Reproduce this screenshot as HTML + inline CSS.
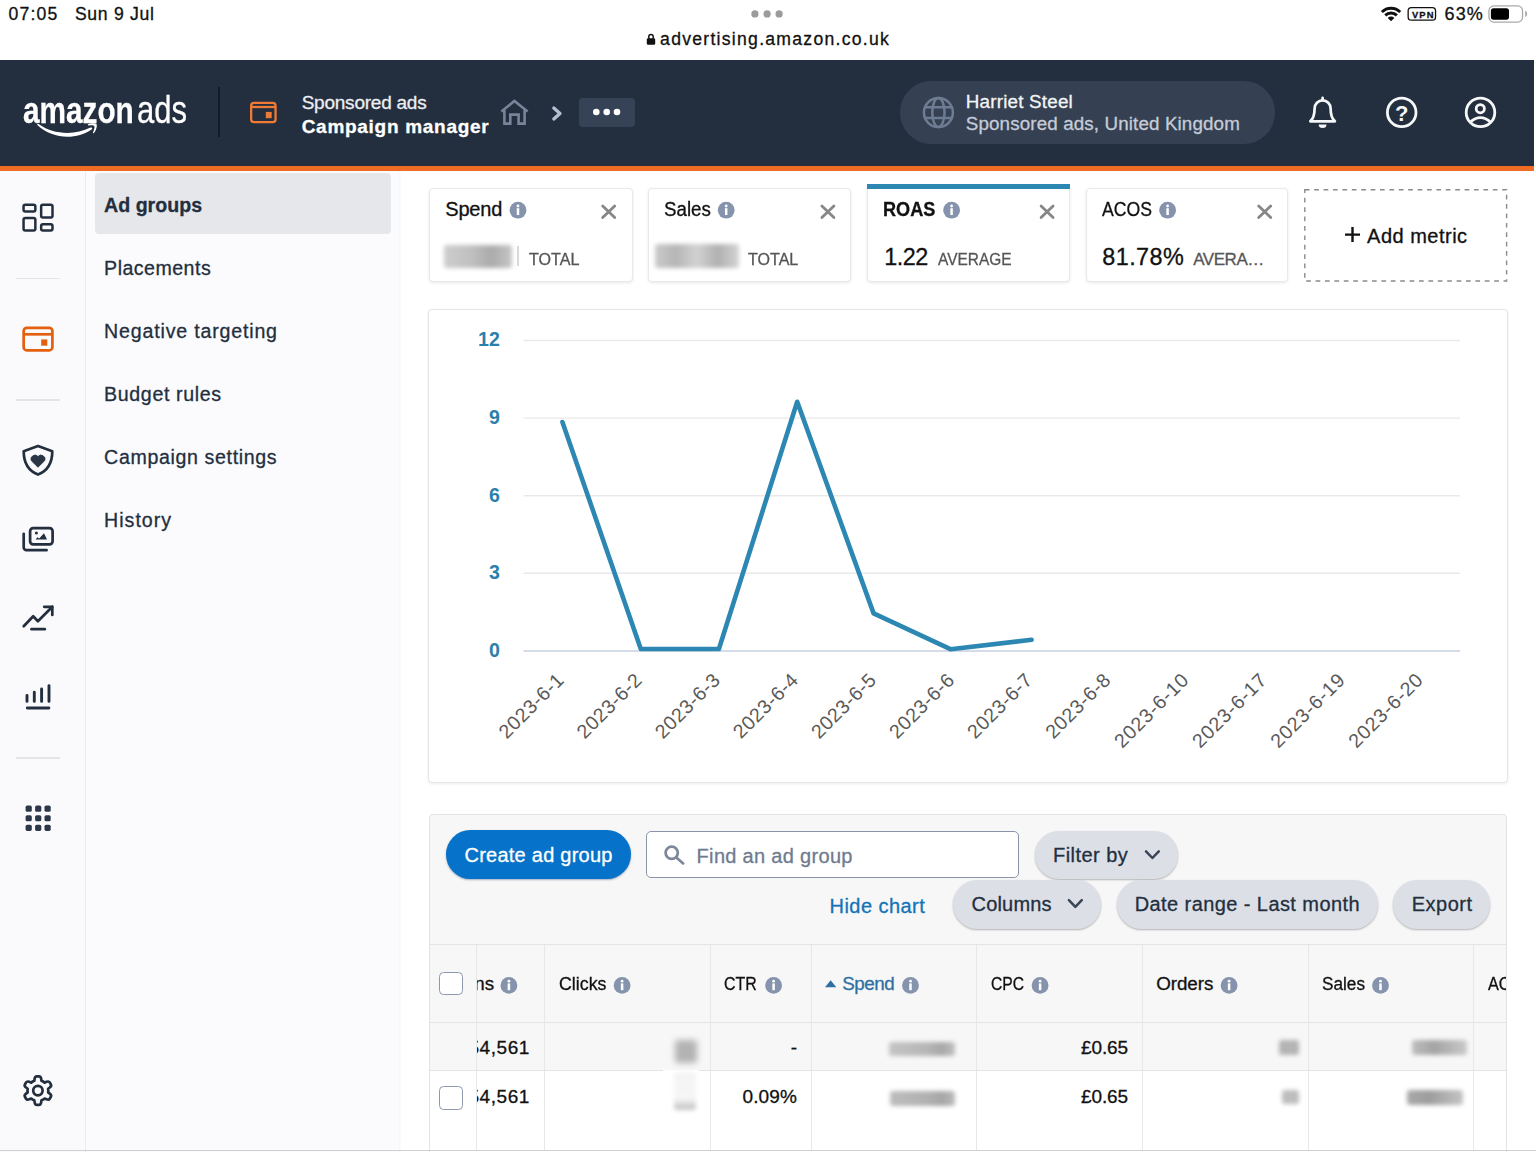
<!DOCTYPE html>
<html lang="en"><head><meta charset="utf-8"><title>Campaign manager - Amazon Ads</title>
<style>
*{box-sizing:border-box;margin:0;padding:0}
html,body{width:1536px;height:1152px;overflow:hidden;background:#fff}
body{position:relative;font-family:"Liberation Sans", Arial, sans-serif;color:#111}
.t{position:absolute;white-space:nowrap;line-height:1;transform-origin:0 0;-webkit-text-stroke:.3px currentColor}
.t.r{transform-origin:100% 0}
div{position:absolute}
svg{position:absolute;left:0;top:0}
svg text{font-family:"Liberation Sans", Arial, sans-serif}
#status{left:0;top:0;width:1536px;height:59.5px;background:#fff}
#header{left:0;top:59.5px;width:1534px;height:106.5px;background:#232f3e}
#orange{left:0;top:165.5px;width:1534px;height:5.6px;background:#f06b23}
#hdiv{left:217.7px;top:86.7px;width:2px;height:50px;background:#141b25}
#dots{left:578.7px;top:98.3px;width:56.3px;height:28.7px;border-radius:4px;background:#364256}
#acct{left:900px;top:81.3px;width:375.4px;height:62.4px;border-radius:31.2px;background:#354052}
#rail{left:0;top:171px;width:85.5px;height:981px;background:#fafafc;border-right:1.5px solid #ebecef}
#nav{left:85.5px;top:171px;width:313.8px;height:981px;background:#fbfbfd;box-shadow:1px 0 2.5px rgba(0,0,0,.05)}
.sep{left:16px;width:44px;height:1.6px;background:#e4e5e9}
#navsel{left:95.4px;top:172.9px;width:295.8px;height:60.7px;border-radius:4px;background:#e6e7ea}
.card{top:188.3px;height:93.7px;background:#fff;border:1px solid #e9e9e9;border-radius:4px;box-shadow:0 1px 3px rgba(0,0,0,.09)}
.card.act{border-radius:0 0 4px 4px}
#actbar{left:866.6px;top:184px;width:203.6px;height:5px;background:#2d87b3}
#addm{left:1304.1px;top:189px;width:203.2px;height:92.6px}
#chart{left:428.2px;top:308.8px;width:1079.5px;height:474px;background:#fff;border:1px solid #e6e6e6;border-radius:4px;box-shadow:0 1px 3px rgba(0,0,0,.08)}
#tpanel{left:429.4px;top:813.7px;width:1077.6px;height:340px;background:#f7f7f7;border:1px solid #e3e3e3;border-radius:4px 4px 0 0}
#thead{left:430.4px;top:943.9px;width:1075.6px;height:79.6px;background:#f7f7f7;border-top:1.4px solid #e4e4e4;border-bottom:1.4px solid #e4e4e4}
#row1{left:430.4px;top:1023.5px;width:1075.6px;height:47.3px;background:#f7f7f7;border-bottom:1.4px solid #e4e4e4}
#row2{left:430.4px;top:1070.8px;width:1075.6px;height:81.2px;background:#fff}
.vsep{top:944.6px;width:1px;height:206px;background:#e7e7e7}
#createbtn{left:446px;top:830.3px;width:184.5px;height:48.8px;border-radius:24.4px;background:#0672c9;box-shadow:0 1px 2px rgba(0,40,90,.35)}
#search{left:646.2px;top:830.6px;width:373.3px;height:47.9px;border-radius:5px;background:#fff;border:1.8px solid #8a94a7}
.pill{border-radius:24.5px;background:#dcdfe6;box-shadow:0 1px 2px rgba(0,0,0,.28)}
.clip{overflow:hidden}
.cb{width:23.8px;height:23.8px;border-radius:4.5px;background:#fff;border:1.8px solid #8d98ad}
.blur{filter:blur(2.2px);border-radius:3px}
#botline{left:0;top:1149.7px;width:1536px;height:1.2px;background:#cfcfcf}
</style></head>
<body>
<div id="status">
<span class="t" id="t0" style="top:6.00px;font-size:17.60px;left:8.50px;letter-spacing:1.192px;">07:05</span>
<span class="t" id="t1" style="top:6.00px;font-size:17.60px;left:74.90px;letter-spacing:0.705px;">Sun 9 Jul</span>
<span class="t" id="t2" style="top:31.00px;font-size:17.60px;left:660.10px;letter-spacing:1.269px;">advertising.amazon.co.uk</span>
<span class="t" id="t3" style="top:5.00px;font-size:18.00px;left:1444.60px;letter-spacing:1.084px;">63%</span>
<span class="t" id="t4" style="top:10.00px;font-size:9.40px;font-weight:700;left:1411.90px;letter-spacing:1.159px;">VPN</span>
</div>
<div id="header"></div><div id="orange"></div>
<div id="hdiv"></div>
<span class="t" id="t5" style="top:92.00px;font-size:37.00px;font-weight:700;color:#fff;left:22.50px;transform:scaleX(0.8043);">amazon</span>
<span class="t" id="t6" style="top:91.00px;font-size:38.50px;color:#fff;left:136.70px;transform:scaleX(0.8054);">ads</span>
<span class="t" id="t7" style="top:93.00px;font-size:19.00px;color:#eceef2;left:301.70px;letter-spacing:-0.236px;">Sponsored ads</span>
<span class="t" id="t8" style="top:117.00px;font-size:19.00px;font-weight:700;color:#fff;left:301.70px;letter-spacing:0.711px;">Campaign manager</span>
<div id="dots"></div>
<div id="acct"></div>
<span class="t" id="t9" style="top:93.00px;font-size:18.80px;color:#f3f4f6;left:965.80px;letter-spacing:0.217px;">Harriet Steel</span>
<span class="t" id="t10" style="top:115.00px;font-size:18.80px;color:#c5ccd8;left:965.80px;letter-spacing:0.128px;">Sponsored ads, United Kingdom</span>
<div id="rail"></div><div id="nav"></div>
<div class="sep" style="top:277.5px"></div><div class="sep" style="top:399px"></div><div class="sep" style="top:757px"></div>
<div id="navsel"></div>
<span class="t" id="t11" style="top:196.00px;font-size:19.60px;font-weight:700;color:#232f3e;left:104.10px;">Ad groups</span>
<span class="t" id="t12" style="top:259.00px;font-size:19.60px;color:#232f3e;left:104.10px;letter-spacing:0.469px;">Placements</span>
<span class="t" id="t13" style="top:322.00px;font-size:19.60px;color:#232f3e;left:104.10px;letter-spacing:0.816px;">Negative targeting</span>
<span class="t" id="t14" style="top:385.00px;font-size:19.60px;color:#232f3e;left:104.10px;letter-spacing:0.635px;">Budget rules</span>
<span class="t" id="t15" style="top:448.00px;font-size:19.60px;color:#232f3e;left:104.10px;letter-spacing:0.639px;">Campaign settings</span>
<span class="t" id="t16" style="top:511.00px;font-size:19.60px;color:#232f3e;left:104.10px;letter-spacing:1.005px;">History</span>
<div class="card" style="left:428.6px;width:204.2px"></div>
<div class="card" style="left:647.8px;width:203.5px"></div>
<div class="card act" style="left:866.6px;width:203.6px"></div>
<div class="card" style="left:1085.7px;width:202.8px"></div>
<div id="actbar"></div>
<div id="addm"></div>
<span class="t" id="t17" style="top:199.00px;font-size:20.00px;left:445.30px;letter-spacing:-0.211px;">Spend</span>
<span class="t" id="t18" style="top:251.00px;font-size:17.00px;color:#555;left:528.60px;transform:scaleX(0.9470);">TOTAL</span>
<span class="t" id="t19" style="top:199.00px;font-size:20.00px;left:664.20px;transform:scaleX(0.9374);">Sales</span>
<span class="t" id="t20" style="top:251.00px;font-size:17.00px;color:#555;left:747.80px;transform:scaleX(0.9452);">TOTAL</span>
<span class="t" id="t21" style="top:199.00px;font-size:20.00px;font-weight:700;left:883.10px;transform:scaleX(0.9066);">ROAS</span>
<span class="t" id="t22" style="top:246.00px;font-size:23.40px;left:884.20px;letter-spacing:-0.477px;">1.22</span>
<span class="t" id="t23" style="top:251.00px;font-size:17.00px;color:#555;left:937.70px;transform:scaleX(0.9081);">AVERAGE</span>
<span class="t" id="t24" style="top:199.00px;font-size:20.00px;left:1101.80px;transform:scaleX(0.8820);">ACOS</span>
<span class="t" id="t25" style="top:246.00px;font-size:23.40px;left:1102.30px;letter-spacing:0.431px;">81.78%</span>
<span class="t" id="t26" style="top:251.00px;font-size:17.00px;color:#555;left:1193.20px;letter-spacing:-0.455px;">AVERA…</span>
<span class="t" id="t27" style="top:226.00px;font-size:20.00px;left:1367.10px;letter-spacing:0.490px;">Add metric</span>
<div class="blur" style="left:444px;top:245px;width:68px;height:23px;background:linear-gradient(90deg,#cdcdcd,#c0c0c0 40%,#ababab 70%,#c6c6c6)"></div>
<div style="position:absolute;left:517px;top:246px;width:2px;height:20px;background:#d9d9d9;filter:blur(.6px)"></div>
<div class="blur" style="left:655px;top:244px;width:84px;height:24px;background:linear-gradient(90deg,#cacaca,#b6b6b6 25%,#d2d2d2 50%,#b0b0b0 75%,#d4d4d4)"></div>
<div id="chart"></div>
<svg id="chartsvg" width="1536" height="1152" viewBox="0 0 1536 1152">
<line x1="523.5" x2="1460" y1="340.5" y2="340.5" stroke="#e9e9e9" stroke-width="1.4"/>
<line x1="523.5" x2="1460" y1="418.1" y2="418.1" stroke="#e9e9e9" stroke-width="1.4"/>
<line x1="523.5" x2="1460" y1="495.7" y2="495.7" stroke="#e9e9e9" stroke-width="1.4"/>
<line x1="523.5" x2="1460" y1="573.3" y2="573.3" stroke="#e9e9e9" stroke-width="1.4"/>
<line x1="523.5" x2="1460" y1="651" y2="651" stroke="#c7d1e2" stroke-width="1.6"/>
<polyline fill="none" stroke="#2d87b3" stroke-width="4.6" stroke-linejoin="round" stroke-linecap="round" points="562.4,422.0 640.8,649.0 718.9,649.0 797.2,401.8 873.6,613.4 950.4,649.2 1031.6,639.8"/>
<text x="499.8" y="346.3" text-anchor="end" font-weight="700" font-size="19.6" fill="#2d7fab">12</text>
<text x="499.8" y="423.9" text-anchor="end" font-weight="700" font-size="19.6" fill="#2d7fab">9</text>
<text x="499.8" y="501.5" text-anchor="end" font-weight="700" font-size="19.6" fill="#2d7fab">6</text>
<text x="499.8" y="579.1" text-anchor="end" font-weight="700" font-size="19.6" fill="#2d7fab">3</text>
<text x="499.8" y="656.7" text-anchor="end" font-weight="700" font-size="19.6" fill="#2d7fab">0</text>
<text x="564.9" y="681.5" text-anchor="end" font-size="19.6" fill="#5a5a5a" textLength="82.2" lengthAdjust="spacing" transform="rotate(-45 564.9 681.5)">2023-6-1</text>
<text x="643.0" y="681.5" text-anchor="end" font-size="19.6" fill="#5a5a5a" textLength="82.2" lengthAdjust="spacing" transform="rotate(-45 643.0 681.5)">2023-6-2</text>
<text x="721.1" y="681.5" text-anchor="end" font-size="19.6" fill="#5a5a5a" textLength="82.2" lengthAdjust="spacing" transform="rotate(-45 721.1 681.5)">2023-6-3</text>
<text x="799.2" y="681.5" text-anchor="end" font-size="19.6" fill="#5a5a5a" textLength="82.2" lengthAdjust="spacing" transform="rotate(-45 799.2 681.5)">2023-6-4</text>
<text x="877.3" y="681.5" text-anchor="end" font-size="19.6" fill="#5a5a5a" textLength="82.2" lengthAdjust="spacing" transform="rotate(-45 877.3 681.5)">2023-6-5</text>
<text x="955.4" y="681.5" text-anchor="end" font-size="19.6" fill="#5a5a5a" textLength="82.2" lengthAdjust="spacing" transform="rotate(-45 955.4 681.5)">2023-6-6</text>
<text x="1033.5" y="681.5" text-anchor="end" font-size="19.6" fill="#5a5a5a" textLength="82.2" lengthAdjust="spacing" transform="rotate(-45 1033.5 681.5)">2023-6-7</text>
<text x="1111.6" y="681.5" text-anchor="end" font-size="19.6" fill="#5a5a5a" textLength="82.2" lengthAdjust="spacing" transform="rotate(-45 1111.6 681.5)">2023-6-8</text>
<text x="1189.7" y="681.5" text-anchor="end" font-size="19.6" fill="#5a5a5a" textLength="95.4" lengthAdjust="spacing" transform="rotate(-45 1189.7 681.5)">2023-6-10</text>
<text x="1267.8" y="681.5" text-anchor="end" font-size="19.6" fill="#5a5a5a" textLength="95.4" lengthAdjust="spacing" transform="rotate(-45 1267.8 681.5)">2023-6-17</text>
<text x="1345.9" y="681.5" text-anchor="end" font-size="19.6" fill="#5a5a5a" textLength="95.4" lengthAdjust="spacing" transform="rotate(-45 1345.9 681.5)">2023-6-19</text>
<text x="1424.0" y="681.5" text-anchor="end" font-size="19.6" fill="#5a5a5a" textLength="95.4" lengthAdjust="spacing" transform="rotate(-45 1424.0 681.5)">2023-6-20</text>
</svg>
<div id="tpanel"></div>
<div id="thead"></div><div id="row1"></div><div id="row2"></div>
<div class="vsep" style="left:476px"></div>
<div class="vsep" style="left:544px"></div>
<div class="vsep" style="left:710px"></div>
<div class="vsep" style="left:811px"></div>
<div class="vsep" style="left:976px"></div>
<div class="vsep" style="left:1142px"></div>
<div class="vsep" style="left:1308px"></div>
<div class="vsep" style="left:1473px"></div>
<div id="createbtn"></div>
<span class="t" id="t28" style="top:845.00px;font-size:20.00px;color:#fff;left:464.50px;letter-spacing:0.240px;">Create ad group</span>
<div id="search"></div>
<span class="t" id="t29" style="top:846.00px;font-size:20.00px;color:#6f7b8f;left:696.60px;letter-spacing:0.311px;">Find an ad group</span>
<span class="t" id="t30" style="top:896.00px;font-size:20.00px;color:#1473b7;left:829.50px;letter-spacing:0.460px;">Hide chart</span>
<div class="pill" style="left:1034.9px;top:830.6px;width:142.8px;height:48.4px"></div>
<div class="pill" style="left:953.4px;top:879.8px;width:148.1px;height:48.9px"></div>
<div class="pill" style="left:1116.5px;top:879.8px;width:261.7px;height:48.9px"></div>
<div class="pill" style="left:1393.2px;top:879.8px;width:96.7px;height:48.9px"></div>
<span class="t" id="t31" style="top:845.00px;font-size:20.00px;color:#232f3e;left:1053.00px;letter-spacing:0.447px;">Filter by</span>
<span class="t" id="t32" style="top:894.00px;font-size:20.00px;color:#232f3e;left:971.60px;letter-spacing:0.163px;">Columns</span>
<span class="t" id="t33" style="top:894.00px;font-size:20.00px;color:#232f3e;left:1134.70px;letter-spacing:0.419px;">Date range - Last month</span>
<span class="t" id="t34" style="top:894.00px;font-size:20.00px;color:#232f3e;left:1411.80px;letter-spacing:0.478px;">Export</span>
<div class="clip" style="left:476.6px;top:960px;width:60px;height:50px"><span class="t r" id="t35" style="top:15.00px;font-size:18.80px;left:17.60px;transform:translateX(-100%);">Impressions</span></div>
<span class="t" id="t36" style="top:975.00px;font-size:18.80px;left:559.00px;transform:scaleX(0.9482);">Clicks</span>
<span class="t" id="t37" style="top:975.00px;font-size:18.80px;left:724.40px;transform:scaleX(0.8495);">CTR</span>
<span class="t" id="t38" style="top:975.00px;font-size:18.80px;color:#2f6fa3;left:842.20px;letter-spacing:-0.453px;">Spend</span>
<span class="t" id="t39" style="top:975.00px;font-size:18.80px;left:990.90px;transform:scaleX(0.8347);">CPC</span>
<span class="t" id="t40" style="top:975.00px;font-size:18.80px;left:1156.30px;letter-spacing:-0.081px;">Orders</span>
<span class="t" id="t41" style="top:975.00px;font-size:18.80px;left:1321.90px;transform:scaleX(0.9152);">Sales</span>
<div class="clip" style="left:1480px;top:960px;width:26.3px;height:50px"><span class="t" id="t42" style="top:15.00px;font-size:18.80px;left:7.60px;transform:scaleX(0.8641);">ACOS</span></div>
<div class="clip" style="left:476.6px;top:1024px;width:60px;height:40px"><span class="t r" id="t43" style="top:14.00px;font-size:19.00px;left:52.80px;letter-spacing:0.575px;margin-left:0.575px;transform:translateX(-100%);">54,561</span></div>
<span class="t r" id="t44" style="top:1038.00px;font-size:19.00px;left:1128.00px;letter-spacing:-0.162px;margin-left:-0.162px;transform:translateX(-100%);">£0.65</span>
<div class="clip" style="left:476.6px;top:1073px;width:60px;height:40px"><span class="t r" id="t45" style="top:14.00px;font-size:19.00px;left:52.80px;letter-spacing:0.575px;margin-left:0.575px;transform:translateX(-100%);">54,561</span></div>
<span class="t r" id="t46" style="top:1087.00px;font-size:19.00px;left:1128.00px;letter-spacing:-0.162px;margin-left:-0.162px;transform:translateX(-100%);">£0.65</span>
<span class="t r" id="t47" style="top:1038.00px;font-size:19.00px;left:797.00px;transform:translateX(-100%);">-</span>
<span class="t r" id="t48" style="top:1087.00px;font-size:19.00px;left:797.00px;letter-spacing:0.181px;margin-left:0.181px;transform:translateX(-100%);">0.09%</span>
<div class="cb" style="left:438.9px;top:971.7px"></div><div class="cb" style="left:438.9px;top:1086.2px"></div>
<div class="blur" style="left:675px;top:1040px;width:22px;height:23px;background:#b3b3b3;filter:blur(3px)"></div>
<div style="position:absolute;left:663px;top:1069.8px;width:36.3px;height:41px;background:#fff"></div>
<div class="blur" style="left:674px;top:1072px;width:22px;height:38px;background:linear-gradient(180deg,#f4f4f4,#f6f6f6 70%,#cfcfcf 90%,#c4c4c4)"></div>
<div class="blur" style="left:889px;top:1041.5px;width:66px;height:14px;background:linear-gradient(90deg,#c4c4c4,#b5b5b5 60%,#a8a8a8 80%,#c0c0c0)"></div>
<div class="blur" style="left:890px;top:1090.5px;width:65px;height:15px;background:linear-gradient(90deg,#bdbdbd,#b0b0b0 60%,#a6a6a6 80%,#bcbcbc)"></div>
<div class="blur" style="left:1279px;top:1040px;width:20px;height:15px;background:#b4b4b4"></div>
<div class="blur" style="left:1282px;top:1089.5px;width:17px;height:14px;background:#bdbdbd"></div>
<div class="blur" style="left:1412px;top:1040px;width:55px;height:15px;background:linear-gradient(90deg,#bdbdbd,#a4a4a4 40%,#c9c9c9)"></div>
<div class="blur" style="left:1407px;top:1089.5px;width:56px;height:15px;background:linear-gradient(90deg,#a9a9a9,#9d9d9d 40%,#c4c4c4)"></div>
<div id="botline"></div>
<svg id="icons" width="1536" height="1152" viewBox="0 0 1536 1152" fill="none">
<g fill="#9b9b9b"><circle cx="754.9" cy="13.9" r="3.6"/><circle cx="767.1" cy="13.9" r="3.6"/><circle cx="779.1" cy="13.9" r="3.6"/></g>
<rect x="646.8" y="38.2" width="8.4" height="6.6" rx="1.3" fill="#111"/><path d="M648.8 38.8V36.7a2.2 2.2 0 0 1 4.4 0V38.8" stroke="#111" stroke-width="1.5"/>
<g stroke="#111" stroke-width="2.9" stroke-linecap="butt"><path d="M1381.86 12.01A13.00 13.00 0 0 1 1400.24 12.01"/><path d="M1385.25 15.40A8.20 8.20 0 0 1 1396.85 15.40"/></g>
<path d="M1391.05 21.20L1387.73 17.88A4.70 4.70 0 0 1 1394.37 17.88Z" fill="#111"/>
<rect x="1408.15" y="7.55" width="27.4" height="12.6" rx="3.2" stroke="#111" stroke-width="1.3"/>
<rect x="1488.95" y="5.95" width="33.6" height="16.1" rx="4.8" stroke="#a9a9a9" stroke-width="1.3"/><rect x="1490.9" y="8.3" width="18.1" height="11.4" rx="2.7" fill="#000"/><path d="M1525.2 10.6q2 .8 2 3.3t-2 3.3z" fill="#a9a9a9"/>
<path d="M38.6 124.0C53 134.5 74 135.8 90.6 127.6C92 126.9 93 128.4 91.6 129.4C75 140.6 52 138.6 37.6 125.2C36.8 124.4 37.6 123.3 38.6 124.0Z" fill="#fff"/>
<path d="M88.2 124.3C90.6 123.2 95 122.8 96.4 124.0C97.6 125.4 96.2 130.6 94.0 133.0C93.4 133.7 92.7 133.3 93.0 132.6C93.9 130.4 95.0 127.0 94.3 126.0C93.5 125.0 90.6 125.2 88.6 125.5C87.8 125.6 87.6 124.7 88.2 124.3Z" fill="#fff"/>
<g stroke="#ee7a35" stroke-width="2.3"><rect x="251.15" y="102.85" width="24.4" height="19.3" rx="2.8"/><path d="M251.15 107H275.55"/></g><rect x="265.8" y="111.9" width="5.9" height="6.3" fill="#ee7a35"/>
<g stroke="#77849a" stroke-width="2.6" stroke-linejoin="miter"><path d="M501.4 111.6L514.4 101L527.6 111.6" stroke-linecap="butt"/><path d="M504.4 110V123.6H510.3V114.6H518.6V123.6H524.6V110"/></g>
<path d="M553.8 108L560 113.5L553.8 119" stroke="#b4bfd2" stroke-width="3.3" stroke-linecap="round" stroke-linejoin="round"/>
<g fill="#fff"><circle cx="596.3" cy="112" r="3.3"/><circle cx="606.7" cy="112" r="3.3"/><circle cx="617" cy="112" r="3.3"/></g>
<g stroke="#6e7c93" stroke-width="2.5"><circle cx="938.4" cy="112.6" r="14.5"/><ellipse cx="938.4" cy="112.6" rx="6.15" ry="14.5"/><path d="M924.9 107.2H951.9M924.9 117.9H951.9"/></g>
<g stroke="#f6f7f8" stroke-width="2.7" stroke-linejoin="round" stroke-linecap="round"><path d="M1310.3 121.3C1313.4 118.4 1314.6 115 1314.6 108.4A8 8 0 0 1 1330.6 108.4C1330.6 115 1331.8 118.4 1334.9 121.3Z"/><path d="M1322.6 97.9V99.8"/></g><path d="M1318.7 124.5A3.9 3.5 0 0 0 1326.5 124.5Z" fill="#f6f7f8"/>
<circle cx="1401.7" cy="112.4" r="14.3" stroke="#f6f7f8" stroke-width="2.8"/><text x="1401.7" y="120.6" text-anchor="middle" font-size="22" font-weight="700" fill="#f6f7f8">?</text>
<g stroke="#f6f7f8" stroke-width="2.8"><circle cx="1480.5" cy="112.4" r="14.3"/><circle cx="1480.3" cy="108.7" r="4.1"/><path d="M1470 122.3Q1480.4 113 1490.8 122.3"/></g>
<g stroke="#232f3e" stroke-width="2.5"><rect x="23.55" y="204.65" width="11.8" height="6.9" rx="1.8"/><rect x="41.15" y="204.65" width="11.35" height="12.9" rx="1.8"/><rect x="23.55" y="217.95" width="11.8" height="12.5" rx="1.8"/><rect x="41.15" y="224.15" width="11.35" height="6.3" rx="1.8"/></g>
<g stroke="#e3600f" stroke-width="2.7"><rect x="23.65" y="327.85" width="28.75" height="22.5" rx="3.2"/><path d="M23.65 334.3H52.4"/></g><rect x="41.2" y="339.4" width="6.1" height="6.3" fill="#e3600f"/>
<path d="M38 446L52.3 451.2C52.3 463.5 47.5 470.8 38 474.6C28.5 470.8 23.7 463.5 23.7 451.2Z" stroke="#232f3e" stroke-width="2.7" stroke-linejoin="round"/>
<path d="M38 467.2L31.3 460.6A3.95 3.95 0 0 1 38 456.6A3.95 3.95 0 0 1 44.7 460.6Z" fill="#2a3546" stroke="#2a3546" stroke-width="1" stroke-linejoin="round"/>
<g stroke="#232f3e" stroke-width="2.7" stroke-linecap="round" stroke-linejoin="round"><rect x="30.1" y="528.15" width="22.5" height="16.2" rx="3"/><path d="M23.7 533.8V547.4a2.8 2.8 0 0 0 2.8 2.8H46.6"/></g>
<circle cx="36.4" cy="533" r="1.5" fill="#232f3e"/><path d="M35.6 539.4L37.4 537.2L39.2 538.4L44 533.3L47 539.4Z" fill="#232f3e"/>
<g stroke="#232f3e" stroke-width="2.7" stroke-linecap="round" stroke-linejoin="round"><path d="M23.7 626.2L33.2 616.3L37.9 621.2L52.3 606.8"/><path d="M44.2 606.8H52.3V614.9"/><path d="M31.5 629.2H44.8"/></g>
<g stroke="#232f3e" stroke-width="2.9" stroke-linecap="round"><path d="M27 695.4V701.4M34.3 692.2V701.4M41.6 688.9V701.4M49 685.6V701.4M27.3 708H48.9"/></g>
<g fill="#2c3849"><rect x="25.60" y="805.60" width="6.2" height="6.2" rx="1.6"/><rect x="35.10" y="805.60" width="6.2" height="6.2" rx="1.6"/><rect x="44.50" y="805.60" width="6.2" height="6.2" rx="1.6"/><rect x="25.60" y="815.15" width="6.2" height="6.2" rx="1.6"/><rect x="35.10" y="815.15" width="6.2" height="6.2" rx="1.6"/><rect x="44.50" y="815.15" width="6.2" height="6.2" rx="1.6"/><rect x="25.60" y="824.70" width="6.2" height="6.2" rx="1.6"/><rect x="35.10" y="824.70" width="6.2" height="6.2" rx="1.6"/><rect x="44.50" y="824.70" width="6.2" height="6.2" rx="1.6"/></g>
<path d="M34.34 1080.83L34.63 1078.79Q34.99 1076.29 36.74 1076.29L39.06 1076.29Q40.81 1076.29 41.17 1078.79L41.46 1080.83A10.40 10.40 0 0 1 44.58 1082.63L46.50 1081.86Q48.83 1080.93 49.71 1082.44L50.87 1084.45Q51.75 1085.97 49.76 1087.52L48.14 1088.79A10.40 10.40 0 0 1 48.14 1092.41L49.76 1093.68Q51.75 1095.23 50.87 1096.75L49.71 1098.76Q48.83 1100.27 46.50 1099.34L44.58 1098.57A10.40 10.40 0 0 1 41.46 1100.37L41.17 1102.41Q40.81 1104.91 39.06 1104.91L36.74 1104.91Q34.99 1104.91 34.63 1102.41L34.34 1100.37A10.40 10.40 0 0 1 31.22 1098.57L29.30 1099.34Q26.97 1100.27 26.09 1098.76L24.93 1096.75Q24.05 1095.23 26.04 1093.68L27.66 1092.41A10.40 10.40 0 0 1 27.66 1088.79L26.04 1087.52Q24.05 1085.97 24.93 1084.45L26.09 1082.44Q26.97 1080.93 29.30 1081.86L31.22 1082.63A10.40 10.40 0 0 1 34.34 1080.83Z" stroke="#232f3e" stroke-width="2.7" stroke-linejoin="round"/>
<circle cx="37.9" cy="1090.6" r="4.7" stroke="#232f3e" stroke-width="2.7"/>
<circle cx="518.0" cy="210.2" r="8.4" fill="#8593ac"/><circle cx="518.0" cy="206.0" r="1.4" fill="#fff"/><rect x="516.75" y="208.20" width="2.5" height="6.8" fill="#fff"/>
<circle cx="726.2" cy="210.2" r="8.4" fill="#8593ac"/><circle cx="726.2" cy="206.0" r="1.4" fill="#fff"/><rect x="724.95" y="208.20" width="2.5" height="6.8" fill="#fff"/>
<circle cx="951.6" cy="210.2" r="8.4" fill="#8593ac"/><circle cx="951.6" cy="206.0" r="1.4" fill="#fff"/><rect x="950.35" y="208.20" width="2.5" height="6.8" fill="#fff"/>
<circle cx="1167.6" cy="210.2" r="8.4" fill="#8593ac"/><circle cx="1167.6" cy="206.0" r="1.4" fill="#fff"/><rect x="1166.35" y="208.20" width="2.5" height="6.8" fill="#fff"/>
<circle cx="508.9" cy="985.4" r="8.4" fill="#8593ac"/><circle cx="508.9" cy="981.2" r="1.4" fill="#fff"/><rect x="507.65" y="983.40" width="2.5" height="6.8" fill="#fff"/>
<circle cx="622.1" cy="985.4" r="8.4" fill="#8593ac"/><circle cx="622.1" cy="981.2" r="1.4" fill="#fff"/><rect x="620.85" y="983.40" width="2.5" height="6.8" fill="#fff"/>
<circle cx="773.6" cy="985.4" r="8.4" fill="#8593ac"/><circle cx="773.6" cy="981.2" r="1.4" fill="#fff"/><rect x="772.35" y="983.40" width="2.5" height="6.8" fill="#fff"/>
<circle cx="910.5" cy="985.4" r="8.4" fill="#8593ac"/><circle cx="910.5" cy="981.2" r="1.4" fill="#fff"/><rect x="909.25" y="983.40" width="2.5" height="6.8" fill="#fff"/>
<circle cx="1040.1" cy="985.4" r="8.4" fill="#8593ac"/><circle cx="1040.1" cy="981.2" r="1.4" fill="#fff"/><rect x="1038.85" y="983.40" width="2.5" height="6.8" fill="#fff"/>
<circle cx="1229.1" cy="985.4" r="8.4" fill="#8593ac"/><circle cx="1229.1" cy="981.2" r="1.4" fill="#fff"/><rect x="1227.85" y="983.40" width="2.5" height="6.8" fill="#fff"/>
<circle cx="1380.5" cy="985.4" r="8.4" fill="#8593ac"/><circle cx="1380.5" cy="981.2" r="1.4" fill="#fff"/><rect x="1379.25" y="983.40" width="2.5" height="6.8" fill="#fff"/>
<path d="M602.7 206L614.7 217.6M614.7 206L602.7 217.6" stroke="#878787" stroke-width="2.8" stroke-linecap="round"/>
<path d="M821.9 206L833.9 217.6M833.9 206L821.9 217.6" stroke="#878787" stroke-width="2.8" stroke-linecap="round"/>
<path d="M1041.1 206L1053.1 217.6M1053.1 206L1041.1 217.6" stroke="#878787" stroke-width="2.8" stroke-linecap="round"/>
<path d="M1258.7 206L1270.7 217.6M1270.7 206L1258.7 217.6" stroke="#878787" stroke-width="2.8" stroke-linecap="round"/>
<rect x="1304.8" y="189.7" width="201.8" height="91.3" stroke="#8a8a8a" stroke-width="1.4" stroke-dasharray="4.7 4.7"/>
<path d="M1345 234.6H1360M1352.5 227.1V242.1" stroke="#111" stroke-width="2.4"/>
<g stroke="#7d8799" stroke-width="2.7" stroke-linecap="round"><circle cx="671.7" cy="852.8" r="6.1"/><path d="M676.3 857.4L683.2 863.4"/></g>
<g stroke="#3a4556" stroke-width="2.5" stroke-linecap="round" stroke-linejoin="round"><path d="M1146 851.4L1152.4 858L1158.8 851.4"/><path d="M1068.9 900.2L1075.35 906.9L1081.8 900.2"/></g>
<path d="M825 987.3H836.3L830.65 980.3Z" fill="#2f6fa3"/>
</svg>
</body></html>
